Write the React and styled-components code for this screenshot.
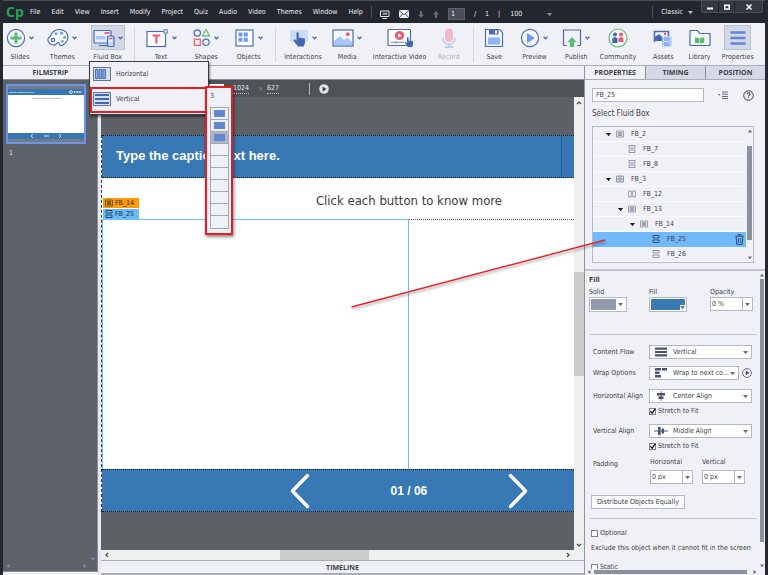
import React from "react";
import styled, { createGlobalStyle } from "styled-components";

const GlobalStyle = createGlobalStyle`
*{
  box-sizing: border-box;
}
body{
  margin: 0;
  overflow: hidden;
  background: #f0f1f7;
  font-family: "DejaVu Sans Condensed", Tahoma, "DejaVu Sans", sans-serif;
  font-size: 7px;
  line-height: 10px;
  color: #3d4047;
}
button, input, select{
  font: inherit;
  color: inherit;
  margin: 0;
  padding: 0;
  border: 0;
  border-radius: 0;
  background: none;
}
svg{
  display: block;
  flex: none;
}
`

const Window = styled.div`
height: 100vh;
display: flex;
flex-direction: column;
position: relative;
overflow: hidden;
border-left: 3px solid #25282f;
border-right: 3px solid #25282f;
`

/* ---------- menu bar ---------- */

const MenuBar = styled.header`
height: 23px;
flex: none;
display: flex;
align-items: center;
background: #23262f;
border-top: 1px solid #4a5254;
color: #eceef2;
`

const Logo = styled.div`
width: 27px;
padding-left: 3px;
font-family: "Open Sans", sans-serif;
font-size: 14px;
line-height: 20px;
font-weight: 700;
color: #23a455;
`

const Menus = styled.nav`
display: flex;
gap: 11px;
`

const MenuButton = styled.button`
white-space: nowrap;
`

const BarLine = styled.i`
width: 1px;
height: 12px;
flex: none;
background: #4d515b;
margin: 0 8px;
`

const BarTools = styled.div`
flex: 1;
display: flex;
align-items: center;
gap: 9px;
padding-top: 4px;

span{
  white-space: nowrap;
}
`

const PageInput = styled.input`
width: 17px;
height: 12px;
background: #4b4e5a;
border: 1px solid #5c606c;
padding-left: 2px;
`

const Zoom = styled.button`
width: 42px;
display: flex;
align-items: center;
justify-content: space-between;
margin-left: 1px;
`

const Workspace = styled.button`
display: flex;
align-items: center;
gap: 5px;
margin-right: 8px;
`

const WindowButtons = styled.div`
align-self: flex-start;
height: 12px;
display: flex;
margin-right: 2px;
background: #343842;
border: 1px solid #4a4e58;
border-top: 0;
border-radius: 0 0 3px 3px;

button{
  width: 16px;
  display: flex;
  align-items: center;
  justify-content: center;
}
button + button{
  border-left: 1px solid #1f2229;
}
button:last-child{
  width: 28px;
}
`

/* ---------- toolbar ---------- */

const Toolbar = styled.div`
height: 43px;
flex: none;
display: flex;
background: #f0f1f7;
border-bottom: 1px solid #a9adb8;
`

const ToolCell = styled.div`
flex: ${(p) => p.$w} 1 0;
min-width: 0;
display: flex;
justify-content: center;
`

const ToolButton = styled.button`
display: flex;
flex: none;
flex-direction: column;
align-items: center;
white-space: nowrap;
padding-top: 2px;
opacity: ${(p) => (p.disabled ? 0.4 : 1)};
`

const ToolIcon = styled.span`
height: 25px;
min-width: 27px;
margin-bottom: 2px;
padding: 0 2px;
display: flex;
align-items: center;
justify-content: center;
gap: 3px;
background: ${(p) => (p.$active ? "#d2d8e7" : "transparent")};
box-shadow: ${(p) => (p.$active ? "inset 0 0 0 1px #b9c0d2" : "none")};
`

const ToolLine = styled.i`
width: 1px;
height: 35px;
margin-top: 4px;
background: #d5d7de;
`

/* ---------- workspace ---------- */

const Body = styled.main`
flex: 1;
min-height: 0;
display: flex;
`

const PanelTitle = styled.h2`
height: 13px;
flex: none;
margin: 0;
font-family: "Open Sans", sans-serif;
font-size: 7px;
line-height: 13px;
font-weight: 700;
text-align: center;
color: #3d4047;
background: #f0f1f7;
`

const Filmstrip = styled.aside`
width: 98px;
flex: none;
display: flex;
flex-direction: column;
border-right: 3px solid #e9eaf0;
padding-bottom: 3px;
`

const FilmBody = styled.div`
flex: 1;
display: flex;
flex-direction: column;
padding: 4px 2px 3px 3px;
background: #5d6169;
border: 1px solid #8a8e97;
border-left: 0;
color: #dfe2e8;
`

const Thumb = styled.button`
width: 80px;
height: 60px;
display: flex;
flex-direction: column;
border: 2px solid #6995ec;
padding: 3px 0;
background: #777b80;
`

const ThumbBar = styled.span`
width: 100%;
height: ${(p) => p.$h}px;
display: flex;
align-items: center;
justify-content: ${(p) => p.$justify};
padding: 0 1px;
background: #3677b5;
color: #fff;
font-family: "Liberation Sans", Arial, sans-serif;
font-size: 2px;
line-height: 4px;
font-weight: 700;
`

const ThumbPage = styled.span`
width: 100%;
flex: 1;
padding-top: 1px;
background: #fff;
color: #444;
font-size: 2px;
line-height: 4px;
text-align: center;
`

const FilmNumber = styled.div`
flex: 1;
padding: 4px 3px;
`

const FilmArrows = styled.div`
display: grid;
grid-template-columns: 1fr auto auto;
gap: 3px 4px;

svg:first-child{
  grid-column: 3;
}
svg:nth-child(2){
  grid-column: 1;
}
`

const Center = styled.section`
flex: 1;
min-width: 0;
display: flex;
flex-direction: column;
`

const StageBar = styled.div`
height: 18px;
flex: none;
margin-top: 13px;
display: flex;
align-items: center;
padding-left: 89px;
gap: 9px;
background: #4f5256;
border-top: 1px solid #8a8e97;
color: #e4e6ea;
`

const WidthBox = styled.input`
width: 34px;
height: 10px;
background: #fff;
`

const Dimension = styled.span`
border-bottom: 1px dotted #b9bcc2;
`

const Times = styled.span`
width: 7px;
margin-right: -7px;
color: #8b8e94;
`

const StageLine = styled(BarLine)`
margin: 0 0 0 21px;
background: #b4b7bc;
`

const StageGrid = styled.div`
flex: 1;
min-height: 0;
display: grid;
grid-template-columns: 1fr 10px;
grid-template-rows: 1fr 10px;
`

const Stage = styled.div`
min-width: 0;
display: flex;
padding: 38px 0;
overflow: hidden;
background: #5d6165;
`

const Slide = styled.div`
width: 130%;
flex: none;
display: flex;
flex-direction: column;
background: #fff;
border-left: 1px dashed #2d3440;
`

const Caption = styled.div`
height: 43px;
flex: none;
display: grid;
grid-template-columns: 3fr 1fr;
background: #3778b5;
border-top: 1px dotted #16202b;
border-bottom: 1px dotted #16202b;
font-family: "Liberation Sans", Arial, sans-serif;
font-size: 13px;
line-height: 40px;
font-weight: 700;
color: #fff;

span{
  padding-left: 14px;
  border-right: 1px dotted #1f4f7c;
}
`

const SlideIntro = styled.div`
height: 41px;
flex: none;
display: grid;
grid-template-columns: 1fr auto 1fr;
align-items: center;
color: #3b3b3b;
font-size: 13px;
line-height: 18px;

p{
  margin: 0;
  padding-top: 4px;
}
`

const Tags = styled.div`
align-self: end;
display: flex;
flex-direction: column;
gap: 1px;
padding-left: 1px;
`

const Tag = styled.span`
width: 36px;
height: 10px;
display: flex;
align-items: center;
gap: 2px;
padding-left: 2px;
background: ${(p) => p.$color};
color: #2e2a25;
font-size: 7px;
line-height: 10px;
`

const Columns = styled.div`
flex: 1;
display: grid;
grid-template-columns: 1fr 1fr;
`

const LeftBox = styled.div`
border: 1px solid #6cc0f7;
border-bottom: 0;
`

const RightBox = styled.div`
border-top: 1px dotted #555;
`

const SlideNav = styled.div`
height: 43px;
flex: none;
display: flex;
align-items: center;
justify-content: center;
gap: 81px;
background: #3778b5;
border-top: 1px dotted #16202b;
border-bottom: 1px dotted #16202b;
color: #fff;
font-family: "Liberation Sans", Arial, sans-serif;
font-size: 12px;
font-weight: 700;
`

const ScrollTrack = styled.div`
display: flex;
flex-direction: ${(p) => (p.$vertical ? "column" : "row")};
align-items: center;
justify-content: space-between;
padding: ${(p) => (p.$vertical ? "3px 0 2px" : "0 3px")};
background: #efeff0;
`

const ScrollThumb = styled.i`
flex: none;
background: #cdcdcd;
width: ${(p) => (p.$vertical ? "10px" : "19%")};
height: ${(p) => (p.$vertical ? "23%" : "10px")};
`

const ScrollSpace = styled.i`
flex: ${(p) => p.$grow};
`

const Timeline = styled(PanelTitle)`
height: 15px;
border-top: 1px solid #a9adb8;
border-bottom: 2px solid #a9adb8;
`

/* ---------- properties panel ---------- */

const Properties = styled.aside`
width: 181px;
flex: none;
display: flex;
flex-direction: column;
background: #f0f1f7;
border-left: 1px solid #8f939d;
`

const Tabs = styled.div`
height: 14px;
flex: none;
display: grid;
grid-template-columns: repeat(3, 1fr);
border-bottom: 1px solid #a9adb8;
`

const Tab = styled.button`
font-family: "Open Sans", sans-serif;
font-weight: 700;
border-left: 1px solid #8f939d;
background: ${(p) => (p.$active ? "#f0f1f7" : "#d5d9e6")};

&:first-child{
  border-left: 0;
}
`

const Selection = styled.div`
flex: none;
padding: 8px 11px 6px 7px;
border-bottom: 2px solid #c4c6cf;
`

const NameRow = styled.div`
display: grid;
grid-template-columns: 1fr auto auto;
align-items: center;
gap: 14px;

input{
  width: 100%;
  height: 14px;
  padding-left: 3px;
  background: #fff;
  border: 1px solid #b4b8c6;
}
button{
  display: flex;
}
`

const SectionLabel = styled.div`
font-size: 8px;
line-height: 12px;
padding: 6px 0;
`

const TreeBox = styled.div`
display: flex;
border: 1px solid #b4b8c6;

ul{
  flex: 1;
  list-style: none;
  margin: 0;
  padding: 0;
}
`

const TreeItem = styled.li`
height: 15px;
display: flex;
align-items: center;
padding: 0 2px 0 ${(p) => 13 + p.$depth * 12}px;
background: ${(p) => (p.$selected ? "#72b9fb" : "transparent")};
border-bottom: 1px solid ${(p) => (p.$selected ? "#72b9fb" : "#fafbfe")};

span{
  flex: 1;
  padding-left: 7px;
}
`

const Toggle = styled.button`
width: 10px;
display: flex;
`

const TreeScroll = styled.div`
width: 7px;
display: flex;
flex-direction: column;
align-items: center;
justify-content: space-between;
padding: 2px 0;

i{
  width: 5px;
  height: 94px;
  margin-bottom: 4px;
  background: #8c919f;
}
`

const Details = styled.div`
flex: 1;
min-height: 0;
display: flex;
`

const DetailsBody = styled.div`
flex: 1;
min-width: 0;
overflow: hidden;
padding: 3px 2px 0 4px;
`

const DetailsTitle = styled.h3`
margin: 0;
font-size: 7px;
line-height: 12px;
font-weight: 700;
`

const FillRow = styled.div`
display: grid;
grid-template-columns: 60px 1fr 42px;
padding: 1px 5px 22px 0;
`

const Field = styled.div`
display: flex;
flex-direction: column;
align-items: flex-start;
gap: ${(p) => p.$gap || 0}px;
`

const Swatch = styled.button`
width: 38px;
height: 15px;
display: flex;
align-items: ${(p) => (p.$corner ? "flex-end" : "center")};
justify-content: flex-end;
padding: 0 ${(p) => (p.$corner ? "1px 1px" : "3px 0")} 0;
border: 1px solid #b4b8c6;
background: linear-gradient(${(p) => p.$color}, ${(p) => p.$color}) 1px 1px / ${(p) => (p.$corner ? "34px" : "25px")} 11px no-repeat #fff;

svg{
  background: #fff;
}
`

const NumberBox = styled.div`
width: 43px;
height: 14px;
display: flex;
background: #fff;
border: 1px solid #b4b8c6;

input{
  flex: 1;
  min-width: 0;
  padding-left: 1px;
}
button{
  width: 10px;
  display: flex;
  align-items: center;
  justify-content: center;
  border-left: 1px solid #b4b8c6;
}
`

const Rule = styled.hr`
margin: 0;
border: 0;
border-top: 1px solid #c4c6cf;
`

const Rows = styled.div`
display: grid;
grid-template-columns: 60px 1fr;
row-gap: 7px;
padding: 10px 5px 5px 0;
`

const RowLabel = styled.label`
padding-left: 4px;
line-height: 14px;
white-space: nowrap;
`

const WithPlay = styled.div`
display: flex;
align-items: center;
gap: 3px;
margin-bottom: 2px;

button{
  display: flex;
}
`

const SelectBox = styled.div`
flex: 1;
min-width: 0;
height: 14px;
display: flex;
align-items: center;
padding: 0 3px 0 4px;
background: #fff;
border: 1px solid #b4b8c6;

select{
  flex: 1;
  min-width: 0;
  appearance: none;
  outline: 0;
  padding-left: 5px;
}
`

const AlignGroup = styled.div`
display: flex;
flex-direction: column;
gap: 3px;

${SelectBox}{
  flex: none;
}
`

const CheckLine = styled.label`
display: flex;
align-items: center;
gap: 2px;
line-height: 11px;
`

const Tick = styled.span`
display: grid;

input, svg{
  grid-area: 1 / 1;
}
input{
  appearance: none;
  width: 7px;
  height: 7px;
  border: 1px solid #7d8290;
  background: #fff;
}
svg{
  z-index: 1;
  pointer-events: none;
}
`

const PaddingRow = styled.div`
display: grid;
grid-template-columns: 61px 52px 1fr;
align-items: start;
padding-bottom: 11px;
`

const PushButton = styled.button`
height: 14px;
margin: 0 0 9px 2px;
padding: 0 5px;
background: #fbfbfe;
border: 1px solid #b4b8c6;
display: block;
`

const Bottom = styled.div`
padding: 9px 0 0 2px;
white-space: nowrap;

p{
  margin: 0;
  padding: 3px 0 8px;
  line-height: 12px;
}
`

const DetailsScroll = styled.div`
width: 6px;
display: flex;
flex-direction: column;
align-items: center;
padding: 2px 0 1px;

i{
  width: 4px;
  flex: 1;
  margin: 2px 0 22px;
  background: #8c919f;
}
`

const BottomScroll = styled.div`
height: 6px;
flex: none;
display: flex;
align-items: center;
gap: 3px;
padding: 0 8px 0 2px;

i{
  flex: 1;
  height: 4px;
  margin-right: 3px;
  background: #8c919f;
}
`

/* ---------- fluid box menu, lies over the workspace ---------- */

const FluidMenu = styled.div`
position: absolute;
left: 86px;
top: 61px;
width: 120px;
padding-bottom: 1px;
background: #f0f1f7;
border: 1px solid #3a3d45;
box-shadow: 1px 2px 2px #0007;
`

const FluidOption = styled.button`
width: 100%;
height: 26px;
display: flex;
align-items: center;
gap: 5px;
padding: 0 0 2px 1px;
border: 2px solid ${(p) => (p.$picked ? "#ea1c22" : "transparent")};
margin-top: ${(p) => (p.$picked ? -1 : 0)}px;
`

const CountMenu = styled.div`
position: absolute;
left: 202px;
top: 86px;
width: 28px;
padding: 3px 2px 4px 3px;
background: #f0f1f7;
border: 2px solid #ea1c22;
box-shadow: 1px 2px 3px #0007;

ol{
  list-style: none;
  margin: 6px 0 0;
  padding: 0;
  border: 1px solid #a3a7b7;
}
`

const CountCell = styled.li`
height: 12px;
display: flex;
padding: 2px;
border-bottom: 1px solid #a3a7b7;
background: ${(p) => (p.$last ? "#b0b5c6" : "transparent")};

&:last-child{
  border-bottom: 0;
}
i{
  flex: 1;
  margin: 0 1px;
  background: ${(p) => (p.$on ? "#6288cf" : "transparent")};
}
`

const Pointer = styled.svg`
position: absolute;
left: 347px;
top: 238px;
pointer-events: none;
filter: drop-shadow(1px 2px 1px #0005);
`

/* ---------- icons ---------- */

const Icon = ({ w = 20, h = 20, children }) => (
  <svg width={w} height={h} viewBox={`0 0 ${w} ${h}`} fill="none" stroke="#4a6db5" strokeWidth="1.2" aria-hidden="true">
    {children}
  </svg>
);

const Caret = ({ color = "#6b7082" }) => (
  <svg width="5" height="5" viewBox="0 0 5 5" fill={color} aria-hidden="true">
    <path d="M0 1h5L2.500 4.200z" />
  </svg>
);

const TURN = { up: 180, left: 90, right: -90, down: 0 };

const SmallArrow = ({ dir, color = "#6b7082" }) => (
  <svg width="4" height="4" viewBox="0 0 4 4" fill={color} aria-hidden="true">
    <path d="M0 .5h4L2 3.500z" transform={`rotate(${TURN[dir]} 2 2)`} />
  </svg>
);

const ScrollArrow = ({ dir }) => (
  <svg width="6" height="6" viewBox="0 0 6 6" fill="none" stroke="#4a4a4a" strokeWidth="1.200" aria-hidden="true">
    <path d="M1 2l2 2 2-2" transform={`rotate(${TURN[dir]} 3 3)`} />
  </svg>
);

const Drop = () => (
  <Icon w={5} h={4}>
    <path d="M.6.8l1.900 1.900L4.400.8" strokeWidth="1.400" />
  </Icon>
);

const Hand = ({ x, y }) => (
  <path
    transform={`translate(${x} ${y})`}
    d="M2.500.8c0-1.100 1.600-1.100 1.600 0v3.400l.3-.1c.1-.7 1.200-.7 1.400 0 .2-.5 1.200-.5 1.400.2.400-.4 1.300-.1 1.300.6v2.600c0 1.200-.8 1.600-.8 2.500H3.300c-.2-1.300-1.900-2.300-2.700-3.900-.4-.9.500-1.500 1.100-.8l.8.9z"
    fill="#4468b0"
    stroke="none"
  />
);

const toolIcons = {
  Slides: (
    <Icon>
      <circle cx="10" cy="10" r="8.600" fill="#f5f8ff" />
      <path d="M10 4.500v11M4.500 10h11" stroke="#5dbb78" strokeWidth="3" />
    </Icon>
  ),
  Themes: (
    <Icon w={22}>
      <path d="M3.500 8C5 3.500 9 1.500 13 1.600c5 .1 8 3.400 7.900 7.600-.1 3-2 5.600-4.600 7.600-1.700 1.300-3.600 1-3.800-.7-.2-1.600-1.800-1.800-2.700-.7-1.100 1.500-3.400 2-5.500 1.100C2 15.500.4 12.700 1.200 10.500c.6-1.500 1.700-1 2.300-2.500z" fill="#f5f8ff" />
      <circle cx="9" cy="5.700" r="1.400" fill="#6b9bf0" stroke="none" />
      <circle cx="14.500" cy="5.200" r="1.600" fill="#6b9bf0" stroke="none" />
      <circle cx="17.500" cy="9.300" r="1.500" fill="#6b9bf0" stroke="none" />
      <circle cx="15.500" cy="13.300" r="1.300" fill="#6b9bf0" stroke="none" />
      <circle cx="6" cy="12" r="1.600" />
    </Icon>
  ),
  "Fluid Box": (
    <Icon w={22}>
      <rect x="1" y="2.500" width="17" height="12.500" rx="1" fill="#e9effc" />
      <path d="M11.500 5h5" stroke="#f2566e" strokeWidth="1.800" />
      <path d="M3 8h9v3.500H3z" fill="#a9c6fb" stroke="none" />
      <path d="M6 17.500h9" />
      <rect x="14.500" y="8" width="6.500" height="10.500" rx="1" fill="#c5d8fb" />
      <path d="M16 10.500h3.500" stroke="#f2566e" />
      <path d="M16 13h3.500" stroke="#fff" />
    </Icon>
  ),
  Text: (
    <Icon w={23}>
      <rect x="1" y="3.500" width="18.500" height="15" fill="#fff" />
      <path d="M6.500 7.500h7.800M10.400 7.500v8" stroke="#f2566e" strokeWidth="2.200" />
      <rect x="18" y="1.800" width="3.300" height="3.300" fill="#f0f1f7" stroke="#63a4ae" />
    </Icon>
  ),
  Shapes: (
    <Icon w={18}>
      <circle cx="4.300" cy="5" r="3.200" />
      <path d="M13 1.600l3.600 6.200H9.400z" stroke="#5dbb78" />
      <rect x="1.300" y="11.300" width="6" height="6" stroke="#f2566e" />
      <circle cx="13" cy="14.300" r="3.200" />
    </Icon>
  ),
  Objects: (
    <Icon>
      <rect x="1" y="2" width="17" height="16" fill="#fff" />
      <path d="M3.500 4.500h4v4h-4zM8.800 4.500h4v4h-4zM3.500 9.800h4v4h-4zM8.800 9.800h4v4h-4z" fill="#6b9bf0" stroke="none" />
    </Icon>
  ),
  Interactions: (
    <Icon w={20}>
      <path d="M1 2h18v12H1z" fill="#cbdcfb" stroke="none" />
      <g transform="translate(4 3) scale(1.400)"><Hand x={0} y={1} /></g>
    </Icon>
  ),
  Media: (
    <Icon w={22}>
      <rect x="1" y="2" width="20" height="16" fill="#f5f8ff" />
      <path d="M2 17v-4l6-5 4 4 3-2.500 5 4.500v3z" fill="#a9c6fb" stroke="none" />
      <circle cx="15.800" cy="6.200" r="1.900" fill="#f2566e" stroke="none" />
    </Icon>
  ),
  "Interactive Video": (
    <Icon w={26}>
      <rect x="1" y="1.500" width="22.500" height="16" rx="1" fill="#fff" />
      <circle cx="12.500" cy="7.500" r="4.600" fill="#f2566e" stroke="none" />
      <path d="M11 5.200l4 2.300-4 2.300z" fill="#fff" stroke="none" />
      <path d="M4 14.300h13M9 13v2.600" stroke="#8c9fc6" />
      <Hand x={17.500} y={9} />
    </Icon>
  ),
  Record: (
    <Icon w={16}>
      <rect x="4" y=".5" width="8" height="13.500" rx="4" fill="#ef6d82" stroke="none" />
      <path d="M2 10c.2 8.500 11.800 8.500 12 0M8 16.300V19M3.500 19.200h9" />
    </Icon>
  ),
  Save: (
    <Icon>
      <path d="M1.500 1.500h14l3 3v14h-17z" fill="#f5f8ff" />
      <path d="M5 1.500h9.500v5H5z" fill="#4a6db5" stroke="none" />
      <path d="M11 2.500h2v3h-2z" fill="#fff" stroke="none" />
      <path d="M4 9.500h12v7H4z" fill="#8db2f5" stroke="none" />
    </Icon>
  ),
  Preview: (
    <Icon>
      <circle cx="10" cy="10" r="8.600" fill="#f5f8ff" />
      <path d="M7 5l8 5.100L7 15.200z" fill="#6b9bf0" stroke="none" />
    </Icon>
  ),
  Publish: (
    <Icon>
      <path d="M5 17.500H1.500V2h17v15.500H15" />
      <path d="M10 9l4.500 5h-2.300v5H7.800v-5H5.500z" fill="#5dbb78" stroke="none" />
    </Icon>
  ),
  Community: (
    <Icon>
      <circle cx="10" cy="10" r="9" stroke="#5dbb78" fill="#f5faf8" />
      <circle cx="7" cy="6.500" r="2" fill="#4468b0" stroke="none" />
      <circle cx="13" cy="6.500" r="2" fill="#f2566e" stroke="none" />
      <path d="M4.300 15V11c0-2.200 5.200-2.200 5.200 0v4z" fill="#4468b0" stroke="none" />
      <path d="M10.500 14V11c0-2.200 4.800-2.200 4.800 0v3z" fill="#f2566e" stroke="none" />
    </Icon>
  ),
  Assets: (
    <Icon>
      <path d="M1.500 14V3.500h14V8" strokeWidth="1.600" />
      <path d="M2 13V9l4-3 3 3v4z" fill="#4468b0" stroke="none" />
      <circle cx="12" cy="6" r="1.200" fill="#f2566e" stroke="none" />
      <path d="M9 8.500h9.500v10H9z" fill="#8db2f5" stroke="none" />
      <path d="M10.200 9v9.500M17.300 9v9.500" stroke="#fff" strokeDasharray="1.300 1.300" />
      <path d="M11.500 13.500H16" stroke="#fff" strokeWidth=".8" />
    </Icon>
  ),
  Library: (
    <Icon w={22}>
      <path d="M1 17.500v-15h7.500l2 3H21v12z" fill="#f5f8ff" />
      <path d="M6 9.300l4.600 1 4.600-1v5.500l-4.600.7-4.600-.7z" fill="#5dbb78" stroke="none" />
      <path d="M10.600 10v5.500" stroke="#fff" strokeWidth=".6" />
    </Icon>
  ),
  Properties: (
    <Icon w={22}>
      <path d="M3.500 4.500h15M3.500 10h15M3.500 15.500h15" stroke="#6288cf" strokeWidth="2.400" />
    </Icon>
  ),
};

const NodeIcon = ({ kind, color = "#868b9c" }) => (
  <svg width="8" height="8" viewBox="0 0 8 8" fill="none" stroke={color} aria-hidden="true">
    {kind === "rows" && <path d="M1 .5h6v2.500H1zM1 5h6v2.500H1z" strokeWidth=".9" />}
    {kind === "columns" && <path d="M.5 1h2.800v6H.5zM4.700 1h2.800v6H4.700z" strokeWidth=".8" />}
    {kind === "grid" && <path d="M.5 1h7v6h-7zM3 1v6M5 1v6M1 4h6" strokeWidth=".9" />}
    {kind === "frame" && (
      <>
        <path d="M.5 1h7v6h-7z" strokeWidth=".8" />
        <path d="M2.200 2.500h3.600v3H2.200zM2.200 2.500l3.600 3M5.800 2.500l-3.600 3" strokeWidth=".8" />
      </>
    )}
  </svg>
);

const FlowIcon = ({ kind }) => (
  <svg width="14" height="10" viewBox="0 0 14 10" fill="#4b5373" aria-hidden="true">
    {kind === "rows" && <path d="M1 .5h12v2.200H1zM1 3.900h12v2.200H1zM1 7.300h12v2.200H1z" />}
    {kind === "wrap" && <path d="M1 0h6v2.600H1zM8 0h5v2.600H8zM1 3.500h4.500v2.600H1zM1 7h6v2.600H1z" />}
    {kind === "center" && <path d="M3 2h8v2.400H3zM4.500 5.500h5v2.400h-5zM6.700 0h.8v10h-.8z" />}
    {kind === "middle" && <path d="M4 1h2.600v8H4zM7.600 2.500H10v5H7.600zM0 4.600h14v.8H0z" />}
  </svg>
);

const StripesIcon = ({ vertical }) => (
  <svg width="18" height="14" viewBox="0 0 18 14" aria-hidden="true">
    <rect x=".5" y=".5" width="17" height="13" fill="#d6e0f5" stroke="#69748f" />
    {vertical ? (
      <path d="M2 3h14M2 7h14M2 11h14" stroke="#4468b0" strokeWidth="2.200" />
    ) : (
      <path d="M2.500 2.500H5v9H2.500zM6.200 2.500h2.500v9H6.200zM9.900 2.500h2.500v9H9.900z" fill="#8fb0ea" stroke="#3b5fa8" strokeWidth=".9" />
    )}
  </svg>
);

/* ---------- data ---------- */

const menus = ["File", "Edit", "View", "Insert", "Modify", "Project", "Quiz", "Audio", "Video", "Themes", "Window", "Help"];

const tools = [
  { name: "Slides", w: 34, drop: true },
  { name: "Themes", w: 50, drop: true },
  { name: "Fluid Box", w: 40, drop: true, active: true },
  { w: 13 },
  { name: "Text", w: 40, drop: true },
  { name: "Shapes", w: 50, drop: true },
  { name: "Objects", w: 34, drop: true },
  { w: 20 },
  { name: "Interactions", w: 34, drop: true },
  { name: "Media", w: 54, drop: true },
  { name: "Interactive Video", w: 50 },
  { name: "Record", w: 48, disabled: true },
  { w: 1 },
  { name: "Save", w: 40 },
  { name: "Preview", w: 40, drop: true },
  { name: "Publish", w: 43, drop: true },
  { name: "Community", w: 40 },
  { name: "Assets", w: 50 },
  { name: "Library", w: 22 },
  { name: "Properties", w: 54, active: true },
];

const nodes = [
  { name: "FB_2", depth: 0, kind: "frame", open: true },
  { name: "FB_7", depth: 1, kind: "rows" },
  { name: "FB_8", depth: 1, kind: "rows" },
  { name: "FB_3", depth: 0, kind: "grid", open: true },
  { name: "FB_12", depth: 1, kind: "columns" },
  { name: "FB_13", depth: 1, kind: "frame", open: true },
  { name: "FB_14", depth: 2, kind: "frame", open: true },
  { name: "FB_25", depth: 3, kind: "rows", selected: true },
  { name: "FB_26", depth: 3, kind: "rows" },
];

/* ---------- parts ---------- */

const TopBar = () => (
  <MenuBar>
    <Logo>Cp</Logo>
    <Menus>
      {menus.map((m) => <MenuButton key={m}>{m}</MenuButton>)}
    </Menus>
    <BarLine />
    <BarTools>
      <svg width="10" height="9" viewBox="0 0 10 9" fill="none" stroke="#e4e6ea" aria-hidden="true">
        <path d="M.5 1h8.500v5.500H.5zM2.500 8.500h4.500" />
        <path d="M3 3h1.500v1.500H3zM5.500 3H7v1.500H5.500z" strokeWidth=".6" />
      </svg>
      <svg width="10" height="8" viewBox="0 0 10 8" aria-hidden="true">
        <path d="M0 0h10v8H0z" fill="#f2f3f5" />
        <path d="M0 .5l5 4.200 5-4.200M0 8l3.500-4M10 8L6.500 4" fill="none" stroke="#3a3d45" strokeWidth=".9" />
      </svg>
      <svg width="6" height="7" viewBox="0 0 6 7" fill="#6a6d76" aria-hidden="true">
        <path d="M2 0h2v3.500h2L3 7 0 3.500h2z" />
      </svg>
      <svg width="6" height="7" viewBox="0 0 6 7" fill="#6a6d76" aria-hidden="true">
        <path d="M2 7h2V3.500h2L3 0 0 3.500h2z" />
      </svg>
      <PageInput aria-label="Slide number" defaultValue="1" />
      <span>/</span>
      <span>1</span>
      <span>|</span>
      <Zoom>100 <Caret color="#8b8e97" /></Zoom>
    </BarTools>
    <BarLine />
    <Workspace>Classic <Caret color="#b9bcc4" /></Workspace>
    <WindowButtons>
      <button aria-label="Minimize">
        <svg width="6" height="6" viewBox="0 0 6 6" fill="#fff"><path d="M0 3.500h6v2H0z" /></svg>
      </button>
      <button aria-label="Maximize">
        <svg width="6" height="6" viewBox="0 0 6 6" fill="none" stroke="#fff" strokeWidth="1.600"><path d="M.8 1.200h4.400v3.800H.8z" /></svg>
      </button>
      <button aria-label="Close">
        <svg width="6" height="6" viewBox="0 0 6 6" stroke="#fff" strokeWidth="1.500"><path d="M.5.500l5 5M5.500.5l-5 5" /></svg>
      </button>
    </WindowButtons>
  </MenuBar>
);

const SelectField = ({ id, icon, value }) => (
  <SelectBox>
    <FlowIcon kind={icon} />
    <select id={id} defaultValue={value}>
      <option>{value}</option>
    </select>
    <Caret />
  </SelectBox>
);

const NumberField = ({ id, value }) => (
  <NumberBox>
    <input id={id} defaultValue={value} />
    <button aria-label="Choose value"><Caret /></button>
  </NumberBox>
);

const Check = ({ label, checked }) => (
  <CheckLine>
    <Tick>
      <input type="checkbox" defaultChecked={checked} />
      {checked && (
        <svg width="7" height="7" viewBox="0 0 7 7" fill="none" stroke="#17181c" strokeWidth="1.300">
          <path d="M1.400 3.200l1.700 2L6.300.8" />
        </svg>
      )}
    </Tick>
    {label}
  </CheckLine>
);

const FilmstripPanel = () => (
  <Filmstrip>
    <PanelTitle>FILMSTRIP</PanelTitle>
    <FilmBody>
      <Thumb aria-label="Slide 1">
        <ThumbBar $h={6} $justify="space-between">
          <span>Type the caption text here.</span>
          <svg width="14" height="4" viewBox="0 0 14 4" fill="none" stroke="#fff" strokeWidth=".8">
            <circle cx="2" cy="2" r="1.400" />
            <path d="M5 2h8" strokeDasharray="1 .6" strokeWidth="1.500" />
          </svg>
        </ThumbBar>
        <ThumbPage>Click each button to know more</ThumbPage>
        <ThumbBar $h={6} $justify="center">
          <svg width="32" height="4" viewBox="0 0 32 4" fill="none" stroke="#fff" strokeWidth=".8">
            <path d="M3 0L1 2l2 2M29 0l2 2-2 2M14 2h5" />
          </svg>
        </ThumbBar>
      </Thumb>
      <FilmNumber>1</FilmNumber>
      <FilmArrows>
        <SmallArrow dir="down" color="#7d8fb5" />
        <SmallArrow dir="left" color="#7d8fb5" />
        <SmallArrow dir="right" color="#7d8fb5" />
      </FilmArrows>
    </FilmBody>
  </Filmstrip>
);

const StagePanel = () => (
  <Center>
    <StageBar>
      <WidthBox aria-label="Preview width" />
      <Dimension>1024</Dimension>
      <Times>×</Times>
      <Dimension>627</Dimension>
      <StageLine />
      <svg width="10" height="10" viewBox="0 0 10 10" aria-hidden="true">
        <circle cx="5" cy="5" r="4.800" fill="#e1e2e5" />
        <path d="M3.600 2.600L7.500 5 3.600 7.400z" fill="#3a3d45" />
      </svg>
    </StageBar>
    <StageGrid>
      <Stage>
        <Slide>
          <Caption><span>Type the caption text here.</span></Caption>
          <SlideIntro>
            <Tags>
              <Tag $color="#ff9a00"><NodeIcon kind="frame" color="#5a4312" />FB_14</Tag>
              <Tag $color="#66bbfa"><NodeIcon kind="rows" color="#1f3c55" />FB_25</Tag>
            </Tags>
            <p>Click each button to know more</p>
          </SlideIntro>
          <Columns>
            <LeftBox />
            <RightBox />
          </Columns>
          <SlideNav>
            <svg width="20" height="36" viewBox="0 0 20 36" fill="none" stroke="#fff" strokeWidth="3.500" strokeLinecap="round" strokeLinejoin="round">
              <path d="M17.500 2.500L2.500 18l15 15.500" />
            </svg>
            <span>01 / 06</span>
            <svg width="20" height="36" viewBox="0 0 20 36" fill="none" stroke="#fff" strokeWidth="3.500" strokeLinecap="round" strokeLinejoin="round">
              <path d="M2.500 2.500L17.500 18l-15 15.500" />
            </svg>
          </SlideNav>
        </Slide>
      </Stage>
      <ScrollTrack $vertical>
        <ScrollArrow dir="up" />
        <ScrollSpace $grow={168} />
        <ScrollThumb $vertical />
        <ScrollSpace $grow={168} />
        <ScrollArrow dir="down" />
      </ScrollTrack>
      <ScrollTrack>
        <ScrollArrow dir="left" />
        <ScrollSpace $grow={173} />
        <ScrollThumb />
        <ScrollSpace $grow={200} />
        <ScrollArrow dir="right" />
      </ScrollTrack>
    </StageGrid>
    <Timeline>TIMELINE</Timeline>
  </Center>
);

const PropertiesPanel = () => (
  <Properties>
    <Tabs>
      <Tab $active>PROPERTIES</Tab>
      <Tab>TIMING</Tab>
      <Tab>POSITION</Tab>
    </Tabs>
    <Selection>
      <NameRow>
        <input aria-label="Object name" defaultValue="FB_25" />
        <button aria-label="Options">
          <svg width="11" height="8" viewBox="0 0 11 8" fill="#6b7082">
            <path d="M0 3h2.500L1.200 5zM4 .5h6v1H4zM4 2.700h6v1H4zM4 4.900h6v1H4zM4 7h6v1H4z" />
          </svg>
        </button>
        <button aria-label="Help">
          <svg width="11" height="11" viewBox="0 0 11 11" fill="none" stroke="#3d4047">
            <circle cx="5.500" cy="5.500" r="4.800" />
            <path d="M4 4.300c0-2 3-2 3 0 0 1.100-1.500 1.100-1.500 2.300M5.500 7.400v1" strokeWidth="1.100" />
          </svg>
        </button>
      </NameRow>
      <SectionLabel>Select Fluid Box</SectionLabel>
      <TreeBox>
        <ul>
          {nodes.map((n) => (
            <TreeItem key={n.name} $depth={n.depth} $selected={n.selected}>
              <Toggle aria-label={n.name}>{n.open && <Caret color="#17181c" />}</Toggle>
              <NodeIcon kind={n.kind} color={n.selected ? "#2c4a69" : undefined} />
              <span>{n.name}</span>
              {n.selected && (
                <svg width="9" height="11" viewBox="0 0 9 11" fill="none" stroke="#2c4a69" strokeWidth=".9">
                  <path d="M.5 2.200h8M3 2V.6h3V2M1.200 2.500l.5 7.900h5.600l.5-7.900M3.300 4v5M5.700 4v5" />
                </svg>
              )}
            </TreeItem>
          ))}
        </ul>
        <TreeScroll>
          <SmallArrow dir="up" />
          <i />
          <SmallArrow dir="down" />
        </TreeScroll>
      </TreeBox>
    </Selection>
    <Details>
      <DetailsBody>
        <DetailsTitle>Fill</DetailsTitle>
        <FillRow>
          <Field>
            Solid
            <Swatch aria-label="Fill type" $color="#9398ab"><Caret /></Swatch>
          </Field>
          <Field>
            Fill
            <Swatch aria-label="Fill colour" $color="#3778b5" $corner><Caret /></Swatch>
          </Field>
          <Field>
            <label htmlFor="opacity">Opacity</label>
            <NumberField id="opacity" value="0 %" />
          </Field>
        </FillRow>
        <Rule />
        <Rows>
          <RowLabel htmlFor="flow">Content Flow</RowLabel>
          <SelectField id="flow" icon="rows" value="Vertical" />
          <RowLabel htmlFor="wrap">Wrap Options</RowLabel>
          <WithPlay>
            <SelectField id="wrap" icon="wrap" value="Wrap to next co..." />
            <button aria-label="Play wrap preview">
              <svg width="10" height="10" viewBox="0 0 10 10" fill="none" stroke="#6b7082">
                <circle cx="5" cy="5" r="4.400" />
                <path d="M3.800 2.700L7.300 5 3.800 7.300z" fill="#3d4663" stroke="none" />
              </svg>
            </button>
          </WithPlay>
          <RowLabel htmlFor="halign">Horizontal Align</RowLabel>
          <AlignGroup>
            <SelectField id="halign" icon="center" value="Center Align" />
            <Check label="Stretch to Fit" checked />
          </AlignGroup>
          <RowLabel htmlFor="valign">Vertical Align</RowLabel>
          <AlignGroup>
            <SelectField id="valign" icon="middle" value="Middle Align" />
            <Check label="Stretch to Fit" checked />
          </AlignGroup>
        </Rows>
        <PaddingRow>
          <RowLabel as="div">Padding</RowLabel>
          <Field $gap={3}>
            <label htmlFor="padh">Horizontal</label>
            <NumberField id="padh" value="0 px" />
          </Field>
          <Field $gap={3}>
            <label htmlFor="padv">Vertical</label>
            <NumberField id="padv" value="0 px" />
          </Field>
        </PaddingRow>
        <PushButton>Distribute Objects Equally</PushButton>
        <Rule />
        <Bottom>
          <Check label="Optional" />
          <p>Exclude this object when it cannot fit in the screen</p>
          <Check label="Static" />
        </Bottom>
      </DetailsBody>
      <DetailsScroll>
        <SmallArrow dir="up" />
        <i />
        <SmallArrow dir="down" />
      </DetailsScroll>
    </Details>
    <BottomScroll>
      <SmallArrow dir="left" />
      <i />
      <SmallArrow dir="right" />
    </BottomScroll>
  </Properties>
);

const App = () => {
  return (
    <>
      <GlobalStyle />
      <Window>
        <TopBar />
        <Toolbar>
          {tools.map((t, i) => (
            <ToolCell key={t.name || i} $w={t.w}>
              {t.name ? (
                <ToolButton disabled={t.disabled}>
                  <ToolIcon $active={t.active}>
                    {toolIcons[t.name]}
                    {t.drop && <Drop />}
                  </ToolIcon>
                  {t.name}
                </ToolButton>
              ) : (
                <ToolLine />
              )}
            </ToolCell>
          ))}
        </Toolbar>
        <Body>
          <FilmstripPanel />
          <StagePanel />
          <PropertiesPanel />
        </Body>
        <FluidMenu>
          <FluidOption><StripesIcon />Horizontal</FluidOption>
          <FluidOption $picked><StripesIcon vertical />Vertical</FluidOption>
        </FluidMenu>
        <CountMenu>
          3
          <ol>
            {Array.from({ length: 10 }, (_, i) => (
              <CountCell key={i} $on={i < 3} $last={i === 2}><i /></CountCell>
            ))}
          </ol>
        </CountMenu>
        <Pointer width="258" height="74" viewBox="0 0 258 74" fill="none" stroke="#e8222a" strokeWidth="1.400">
          <path d="M1.500 69L255 2" />
        </Pointer>
      </Window>
    </>
  );
};

export default App;
